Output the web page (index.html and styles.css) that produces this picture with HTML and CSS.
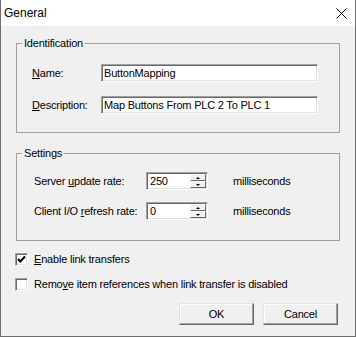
FILE: index.html
```html
<!DOCTYPE html>
<html>
	<head>
		<meta charset="UTF-8">
		<title>General</title>
		<link rel="stylesheet" href="styles.css">
	</head>
	<body>
		<div class="window">
			<div class="titlebar">
				<span class="title">General</span>
				<svg class="close" width="11" height="11" viewBox="0 0 11 11">
					<path d="M0.5 0.5 L10.5 10.5 M10.5 0.5 L0.5 10.5" stroke="#000" stroke-width="1" fill="none"/>
				</svg>
			</div>
			<div class="content">
				<fieldset class="group ident">
					<legend>Identification</legend>
					<div class="rows">
						<label><u>N</u>ame:</label>
						<div class="edit">ButtonMapping</div>
						<label><u>D</u>escription:</label>
						<div class="edit">Map Buttons From PLC 2 To PLC 1</div>
					</div>
				</fieldset>
				<fieldset class="group settings">
					<legend>Settings</legend>
					<div class="rows">
						<label>Server <u>u</u>pdate rate:</label>
						<div class="spin">
							<span class="value">250</span>
							<span class="arrows"><i class="up"></i><i class="down"></i></span>
						</div>
						<span class="unit">milliseconds</span>
						<label>Client I/O <u>r</u>efresh rate:</label>
						<div class="spin">
							<span class="value">0</span>
							<span class="arrows"><i class="up"></i><i class="down"></i></span>
						</div>
						<span class="unit">milliseconds</span>
					</div>
				</fieldset>
				<div class="checks">
					<div class="check">
						<span class="box">
							<svg width="9" height="9" viewBox="0 0 9 9"><path d="M1 4 L3.3 6.5 L8 1.5" stroke="#000" stroke-width="2" fill="none"/></svg>
						</span>
						<span><u>E</u>nable link transfers</span>
					</div>
					<div class="check">
						<span class="box"></span>
						<span>Remo<u>v</u>e item references when link transfer is disabled</span>
					</div>
				</div>
				<div class="buttons">
					<div class="btn">OK</div>
					<div class="btn">Cancel</div>
				</div>
			</div>
		</div>
	</body>
</html>
```

FILE: styles.css
```css
*,
*::before,
*::after{
	box-sizing: border-box;
}
body{
	margin: 0;
	font: 11px/13px "Liberation Sans", Arial, sans-serif;
	letter-spacing: -0.2px;
	color: #000;
	background: #f0f0f0;
}
u{
	text-decoration: underline;
	text-underline-offset: 1px;
}
.window{
	width: 356px;
	height: 337px;
	border: 1px solid #6e6e6e;
	border-top: none;
	background: #f0f0f0;
}
.titlebar{
	height: 26px;
	background: #fff;
	display: flex;
	align-items: center;
	justify-content: space-between;
	padding: 0 8px 0 3px;
	font-size: 12px;
	letter-spacing: 0;
}
.titlebar .close{
	display: block;
}
.content{
	padding: 0 15px;
}
.group{
	margin: 11px 0 0;
	padding: 0;
	min-width: 0;
	border: 1px solid #a0a0a0;
}
.group legend{
	margin-left: 5px;
	padding: 0 2px;
	line-height: 13px;
}
.group.settings{
	margin-top: 14px;
}
.ident .rows{
	display: grid;
	grid-template-columns: 69px 217px;
	row-gap: 14px;
	align-items: center;
	margin: 14px 0 18px 15px;
}
.settings .rows{
	display: grid;
	grid-template-columns: 112px 62px auto;
	row-gap: 12px;
	align-items: center;
	margin: 12px 0 20px 17px;
}
.settings .unit{
	margin-left: 25px;
}
.edit,
.spin,
.check .box{
	background: #fff;
	border: 1px solid;
	border-color: #a0a0a0 #fff #fff #a0a0a0;
	box-shadow: inset 1px 1px 0 #696969, inset -1px -1px 0 #e3e3e3;
}
.edit{
	height: 18px;
	padding: 2px 2px 0;
	white-space: nowrap;
}
.spin{
	height: 18px;
	display: flex;
}
.spin .value{
	flex: 1;
	padding: 2px 0 0 3px;
}
.spin .arrows{
	width: 16px;
	margin: 1px 1px 1px 0;
	display: flex;
	flex-direction: column;
}
.spin .arrows i{
	flex: 1;
	display: flex;
	align-items: center;
	justify-content: center;
	background: #f0f0f0;
	border: 1px solid;
	border-color: #fff #696969 #696969 #fff;
}
.spin .arrows i::after{
	content: "";
	width: 0;
	height: 0;
	border-left: 2px solid transparent;
	border-right: 2px solid transparent;
}
.spin .arrows .up::after{
	border-bottom: 2px solid #000;
}
.spin .arrows .down::after{
	border-top: 2px solid #000;
}
.checks{
	margin-top: 12px;
	display: flex;
	flex-direction: column;
	gap: 12px;
}
.check{
	display: flex;
	align-items: center;
	gap: 6px;
	margin-left: -1px;
}
.check .box{
	width: 13px;
	height: 13px;
	display: flex;
	align-items: center;
	justify-content: center;
}
.check .box svg{
	display: block;
}
.buttons{
	margin: 12px 2px 0 0;
	display: flex;
	justify-content: flex-end;
	gap: 9px;
}
.btn{
	width: 75px;
	height: 22px;
	display: flex;
	align-items: center;
	justify-content: center;
	background: #f0f0f0;
	border: 1px solid;
	border-color: #e3e3e3 #696969 #696969 #e3e3e3;
	box-shadow: inset -1px -1px 0 #a0a0a0, inset 1px 1px 0 #fff;
}
```
